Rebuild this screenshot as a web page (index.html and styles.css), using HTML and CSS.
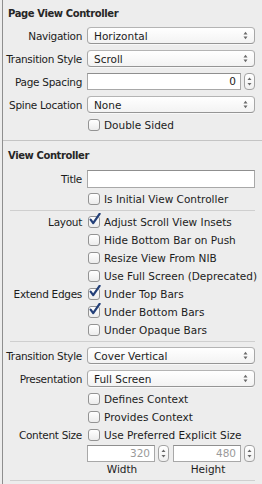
FILE: index.html
```html
<!DOCTYPE html>
<html lang="en">
<head>
  <meta charset="UTF-8">
  <meta name="viewport" content="width=device-width, initial-scale=1.0">
  <title>Attributes Inspector</title>
  <link rel="stylesheet" href="styles.css">
</head>
<body>
  <div class="panel">
    <!-- Page View Controller -->
    <div class="group">
      <h2 class="group-title">Page View Controller</h2>
      <div class="row">
        <span class="label">Navigation</span>
        <div class="popup"><span>Horizontal</span><svg class="arrows" width="5" height="9" viewBox="0 0 5 9"><path d="M0.5 3.5 L2.5 0.8 L4.5 3.5 Z M0.5 5.5 L2.5 8.2 L4.5 5.5 Z" fill="#6a6a6a"/></svg></div>
      </div>
      <div class="row">
        <span class="label">Transition Style</span>
        <div class="popup"><span>Scroll</span><svg class="arrows" width="5" height="9" viewBox="0 0 5 9"><path d="M0.5 3.5 L2.5 0.8 L4.5 3.5 Z M0.5 5.5 L2.5 8.2 L4.5 5.5 Z" fill="#6a6a6a"/></svg></div>
      </div>
      <div class="row">
        <span class="label">Page Spacing</span>
        <div class="field-group">
          <div class="field value">0</div>
          <div class="stepper"><svg width="7" height="15" viewBox="0 0 7 15"><path d="M1.5 6 L3.5 3.5 L5.5 6 Z M1.5 9 L3.5 11.5 L5.5 9 Z" fill="#6a6a6a"/></svg></div>
        </div>
      </div>
      <div class="row">
        <span class="label">Spine Location</span>
        <div class="popup"><span>None</span><svg class="arrows" width="5" height="9" viewBox="0 0 5 9"><path d="M0.5 3.5 L2.5 0.8 L4.5 3.5 Z M0.5 5.5 L2.5 8.2 L4.5 5.5 Z" fill="#6a6a6a"/></svg></div>
      </div>
      <div class="row short">
        <span class="label"></span>
        <div class="check"><span class="box"></span>Double Sided</div>
      </div>
    </div>

    <hr class="section-rule">

    <!-- View Controller -->
    <div class="group">
      <h2 class="group-title tall">View Controller</h2>
      <div class="row title-row">
        <span class="label">Title</span>
        <div class="field"></div>
      </div>
      <div class="row short">
        <span class="label"></span>
        <div class="check"><span class="box"></span>Is Initial View Controller</div>
      </div>

      <hr class="rule">

      <div class="row short">
        <span class="label">Layout</span>
        <div class="check"><span class="box checked"><svg width="14" height="14" viewBox="0 0 14 14"><path d="M2.6 6.6 L5.2 10.2 L11.6 0.8" fill="none" stroke="#233f78" stroke-width="2.2" stroke-linecap="round" stroke-linejoin="round"/></svg></span>Adjust Scroll View Insets</div>
      </div>
      <div class="row short">
        <span class="label"></span>
        <div class="check"><span class="box"></span>Hide Bottom Bar on Push</div>
      </div>
      <div class="row short">
        <span class="label"></span>
        <div class="check"><span class="box"></span>Resize View From NIB</div>
      </div>
      <div class="row short">
        <span class="label"></span>
        <div class="check"><span class="box"></span>Use Full Screen (Deprecated)</div>
      </div>
      <div class="row short">
        <span class="label">Extend Edges</span>
        <div class="check"><span class="box checked"><svg width="14" height="14" viewBox="0 0 14 14"><path d="M2.6 6.6 L5.2 10.2 L11.6 0.8" fill="none" stroke="#233f78" stroke-width="2.2" stroke-linecap="round" stroke-linejoin="round"/></svg></span>Under Top Bars</div>
      </div>
      <div class="row short">
        <span class="label"></span>
        <div class="check"><span class="box checked"><svg width="14" height="14" viewBox="0 0 14 14"><path d="M2.6 6.6 L5.2 10.2 L11.6 0.8" fill="none" stroke="#233f78" stroke-width="2.2" stroke-linecap="round" stroke-linejoin="round"/></svg></span>Under Bottom Bars</div>
      </div>
      <div class="row short">
        <span class="label"></span>
        <div class="check"><span class="box"></span>Under Opaque Bars</div>
      </div>

      <hr class="rule">

      <div class="row">
        <span class="label">Transition Style</span>
        <div class="popup"><span>Cover Vertical</span><svg class="arrows" width="5" height="9" viewBox="0 0 5 9"><path d="M0.5 3.5 L2.5 0.8 L4.5 3.5 Z M0.5 5.5 L2.5 8.2 L4.5 5.5 Z" fill="#6a6a6a"/></svg></div>
      </div>
      <div class="row">
        <span class="label">Presentation</span>
        <div class="popup"><span>Full Screen</span><svg class="arrows" width="5" height="9" viewBox="0 0 5 9"><path d="M0.5 3.5 L2.5 0.8 L4.5 3.5 Z M0.5 5.5 L2.5 8.2 L4.5 5.5 Z" fill="#6a6a6a"/></svg></div>
      </div>
      <div class="row short">
        <span class="label"></span>
        <div class="check"><span class="box"></span>Defines Context</div>
      </div>
      <div class="row short">
        <span class="label"></span>
        <div class="check"><span class="box"></span>Provides Context</div>
      </div>
      <div class="row short">
        <span class="label">Content Size</span>
        <div class="check"><span class="box"></span>Use Preferred Explicit Size</div>
      </div>
      <div class="row size-row">
        <span class="label"></span>
        <div class="size-fields">
          <div class="field-group">
            <div class="field value muted">320</div>
            <div class="stepper"><svg width="7" height="15" viewBox="0 0 7 15"><path d="M1.5 6 L3.5 3.5 L5.5 6 Z M1.5 9 L3.5 11.5 L5.5 9 Z" fill="#6a6a6a"/></svg></div>
          </div>
          <div class="field-group">
            <div class="field value muted">480</div>
            <div class="stepper"><svg width="7" height="15" viewBox="0 0 7 15"><path d="M1.5 6 L3.5 3.5 L5.5 6 Z M1.5 9 L3.5 11.5 L5.5 9 Z" fill="#6a6a6a"/></svg></div>
          </div>
        </div>
      </div>
      <div class="row caption-row">
        <span class="label"></span>
        <div class="size-fields captions">
          <span>Width</span>
          <span>Height</span>
        </div>
      </div>

      <hr class="rule bottom">
    </div>
  </div>
</body>
</html>
```

FILE: styles.css
```css
body {
  margin: 0;
  background-color: #ededed;
  font-family: "DejaVu Sans", sans-serif;
  font-size: 10.5px;
  color: #1c1c1c;
  overflow: hidden;
}

.panel {
  margin-left: 2px;
  border-left: 1px solid #8e8e8e;
  height: 484px;
  padding-right: 7px;
}

.group-title {
  margin: 0;
  padding-left: 5px;
  height: 24px;
  line-height: 27px;
  font-size: 10px;
  font-weight: bold;
  letter-spacing: -0.4px;
  color: #262626;
}

.group-title.tall {
  height: 27px;
  line-height: 30px;
}

.row {
  display: grid;
  grid-template-columns: 79px 1fr;
  column-gap: 5px;
  align-items: center;
  height: 23px;
}

.row.short {
  height: 18px;
}

.row.title-row {
  height: 22px;
}

.row.size-row {
  height: 19px;
}

.row.caption-row {
  height: 12px;
}

.label {
  text-align: right;
  white-space: nowrap;
  letter-spacing: -0.3px;
}

/* Pop-up buttons */
.popup {
  height: 15px;
  border: 1px solid #a7a7a7;
  border-top-color: #b4b4b4;
  border-bottom-color: #959595;
  border-radius: 4px;
  background: linear-gradient(#ffffff, #f3f3f3);
  display: flex;
  align-items: center;
  padding: 0 6px 0 6px;
  box-shadow: 0 1px 0 rgba(255,255,255,0.6);
}

.popup .arrows {
  margin-left: auto;
}

/* Text fields */
.field {
  height: 16px;
  background: #fff;
  border: 1px solid #a8a8a8;
  border-top-color: #8f8f8f;
  box-sizing: border-box;
  flex: 1;
}

.row.title-row .field {
  height: 18px;
}

.field.value {
  text-align: right;
  padding-right: 4px;
  line-height: 15px;
  height: 17px;
}

.field.muted {
  color: #9a9a9a;
}

.field-group {
  display: flex;
  align-items: center;
  gap: 3px;
  flex: 1;
}

.stepper {
  width: 9px;
  height: 15px;
  border: 1px solid #a3a3a3;
  border-radius: 4px;
  background: linear-gradient(#ffffff, #f0f0f0);
  display: flex;
  align-items: center;
  justify-content: center;
}

.size-fields {
  display: flex;
  gap: 4px;
}

.captions span {
  flex: 1;
  text-align: center;
  padding-right: 12px;
}

/* Checkboxes */
.check {
  display: flex;
  align-items: center;
  white-space: nowrap;
}

.box {
  width: 12px;
  height: 12px;
  box-sizing: border-box;
  border: 1px solid #939393;
  border-radius: 3px;
  background: linear-gradient(#ffffff, #ececec);
  margin: 0 4px 0 1px;
  position: relative;
  flex-shrink: 0;
}

.box.checked svg {
  position: absolute;
  left: -1px;
  top: -4px;
}

/* Separators */
.section-rule {
  border: 0;
  border-top: 1px solid #c4c4c4;
  margin: 6px -7px 0 0;
}

.rule {
  border: 0;
  border-top: 1px solid #cfcfcf;
  margin: 2px 0 2px 7px;
}

.rule.bottom {
  margin-top: 5px;
}
```
